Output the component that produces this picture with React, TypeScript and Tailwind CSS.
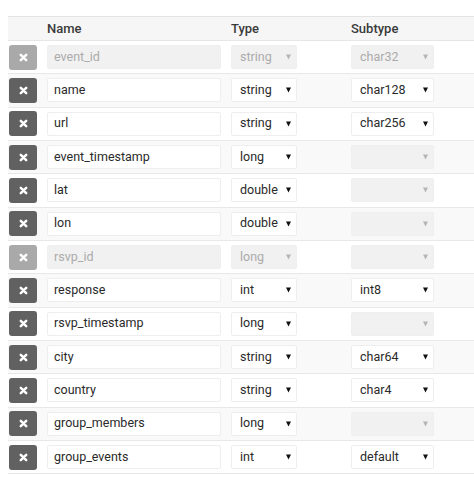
import React from 'react'

type Field = {
  name: string
  type: string
  subtype: string
  locked?: boolean
}

const FIELDS: Field[] = [
  { name: 'event_id', type: 'string', subtype: 'char32', locked: true },
  { name: 'name', type: 'string', subtype: 'char128' },
  { name: 'url', type: 'string', subtype: 'char256' },
  { name: 'event_timestamp', type: 'long', subtype: '' },
  { name: 'lat', type: 'double', subtype: '' },
  { name: 'lon', type: 'double', subtype: '' },
  { name: 'rsvp_id', type: 'long', subtype: '', locked: true },
  { name: 'response', type: 'int', subtype: 'int8' },
  { name: 'rsvp_timestamp', type: 'long', subtype: '' },
  { name: 'city', type: 'string', subtype: 'char64' },
  { name: 'country', type: 'string', subtype: 'char4' },
  { name: 'group_members', type: 'long', subtype: '' },
  { name: 'group_events', type: 'int', subtype: 'default' },
]

function Arrow({ muted }: { muted: boolean }) {
  return (
    <svg width="5" height="6" viewBox="0 0 5 6" className={muted ? 'text-[#b5b5b5]' : 'text-[#111]'}>
      <path d="M0 0.5h5L2.5 5.5z" fill="currentColor" />
    </svg>
  )
}

function Select({ value, disabled, width }: { value: string; disabled: boolean; width: string }) {
  return (
    <div
      className={`${width} h-[24px] flex items-center justify-between pl-[8px] pr-[5px] rounded-[2px] border ${
        disabled ? 'bg-[#f1f1f1] border-[#efefef] text-[#ababab]' : 'bg-white border-[#eeeeee] text-[#2a2a2a]'
      }`}
    >
      <span>{value}</span>
      <Arrow muted={disabled} />
    </div>
  )
}

export default function App() {
  return (
    <div className="w-[474px] h-[479px] bg-white pt-[16px] pl-[8px] text-[12.5px] text-[#2a2a2a]" style={{ fontFamily: 'Roboto, "Liberation Sans", sans-serif' }}>
      <div className="border-t border-[#e4e4e4]">
        <div className="h-[24px] flex items-center bg-[#f6f6f6] border-b border-[#e6e6e6] font-medium text-[13px] text-[#3a3a3a]">
          <div className="w-[39px]" />
          <div className="w-[184px]">Name</div>
          <div className="w-[120px]">Type</div>
          <div>Subtype</div>
        </div>
        {FIELDS.map((f, i) => {
          const subDisabled = f.locked || f.subtype === ''
          return (
            <div
              key={f.name}
              className={`h-[33.33px] flex items-center pl-[1px] border-b border-[#e8e8e8] ${i % 2 === 1 ? 'bg-[#f9f9f9]' : 'bg-white'}`}
            >
              <button
                className={`w-[28px] h-[25px] rounded-[3px] flex items-center justify-center ${f.locked ? 'bg-[#a9a9a9]' : 'bg-[#616161]'}`}
              >
                <svg width="9" height="9" viewBox="0 0 10 10">
                  <path d="M2 2l6 6M8 2l-6 6" stroke="white" strokeWidth="2.8" strokeLinecap="round" />
                </svg>
              </button>
              <div
                className={`ml-[10px] w-[174px] h-[24px] flex items-center pl-[6px] rounded-[2px] border ${
                  f.locked ? 'bg-[#f1f1f1] border-[#efefef] text-[#ababab]' : 'bg-white border-[#eeeeee]'
                }`}
              >
                {f.name}
              </div>
              <div className="ml-[10px]">
                <Select value={f.type} disabled={!!f.locked} width="w-[66px]" />
              </div>
              <div className="ml-[54px]">
                <Select value={f.subtype} disabled={subDisabled} width="w-[83px]" />
              </div>
            </div>
          )
        })}
      </div>
    </div>
  )
}
